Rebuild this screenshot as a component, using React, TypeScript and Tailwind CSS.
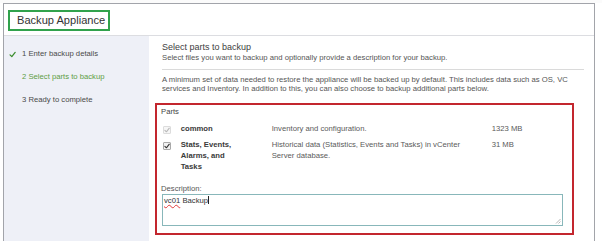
import React from "react";

const parts = [
  {
    name: "common",
    desc: "Inventory and configuration.",
    size: "1323 MB",
    locked: true,
  },
  {
    name: "Stats, Events, Alarms, and Tasks",
    desc: "Historical data (Statistics, Events and Tasks) in vCenter Server database.",
    size: "31 MB",
    locked: false,
  },
];

const steps = [
  { n: 1, label: "Enter backup details", done: true, active: false },
  { n: 2, label: "Select parts to backup", done: false, active: true },
  { n: 3, label: "Ready to complete", done: false, active: false },
];

function Check({ className }: { className?: string }) {
  return (
    <svg viewBox="0 0 10 10" className={className}>
      <path d="M1.5 5.5 L4 8 L8.8 2" fill="none" stroke="currentColor" strokeWidth="1.8" strokeLinecap="round" strokeLinejoin="round" />
    </svg>
  );
}

function Box({ locked }: { locked: boolean }) {
  return (
    <div
      className={
        "w-[8px] h-[8px] mt-[1.5px] rounded-[1px] border flex items-center justify-center " +
        (locked ? "border-[#dcdcdc] bg-[#f6f6f6] text-[#b8b8b8]" : "border-[#a9a9a9] bg-[#f2f2f2] text-[#333]")
      }
    >
      <Check className="w-[6px] h-[6px]" />
    </div>
  );
}

export default function App() {
  return (
    <div className="w-[602px] h-[241px] bg-white overflow-hidden font-['Liberation_Sans',Arial,sans-serif] text-[#5a5a5a]">
      {/* sliver of the page behind the dialog */}
      <div className="h-[3px] bg-[#fbfbfb]" />

      <div className="ml-[3px] w-[592px] h-[238px] border-l border-t border-r border-[#a2a4aa] flex flex-col">
        <div className="h-[32px] shrink-0 border-b border-[#dcdde1] pl-[4px] pt-[6px]">
          <div className="w-[102px] h-[21px] border-2 border-[#31a24c] flex items-center pl-[7px] text-[11.1px] text-[#333]">
            Backup Appliance
          </div>
        </div>

        <div className="flex flex-1">
          <div className="w-[145px] shrink-0 bg-[#eef0f7] pt-[13px] pl-[5px]">
            {steps.map((s) => (
              <div key={s.n} className="flex h-[23px] text-[7.7px] leading-[10px]">
                <div className="w-[13px] flex pt-[2px]">
                  {s.done && <Check className="w-[7px] h-[7px] text-[#3b8d2d]" />}
                </div>
                <span className={s.active ? "text-[#5e9e45]" : "text-[#4a4a4a]"}>
                  {s.n} {s.label}
                </span>
              </div>
            ))}
          </div>

          <div className="flex-1 pl-[6px] pt-[6px]">
            <div className="pl-[7px]">
              <div className="text-[9px] leading-[11px] text-[#3e3e3e]">Select parts to backup</div>
              <div className="text-[7.7px] leading-[9px] text-[#555]">
                Select files you want to backup and optionally provide a description for your backup.
              </div>
            </div>
            <div className="ml-[7px] mt-[7px] w-[422px] h-px bg-[#dadada]" />
            <p className="pl-[7px] mt-[5px] w-[430px] text-[7.7px] leading-[9px] text-[#555]">
              A minimum set of data needed to restore the appliance will be backed up by default. This includes data
              such as OS, VC services and Inventory. In addition to this, you can also choose to backup additional parts
              below.
            </p>

            <div className="mt-[10px] w-[419px] h-[132px] border-2 border-[#c3262e] pl-[4px] pt-[2px]">
              <div className="text-[7.7px] leading-[9px] text-[#444]">Parts</div>
              <div className="mt-[8px] flex flex-col gap-[5.7px]">
                {parts.map((p) => (
                  <div key={p.name} className="flex pl-[2px] text-[7.7px] leading-[10.7px]">
                    <div className="w-[17.7px] shrink-0">
                      <Box locked={p.locked} />
                    </div>
                    <div className="w-[91px] shrink-0 pr-[29px] font-bold text-[#3a3a3a]">{p.name}</div>
                    <div className="w-[220px] shrink-0 pr-[16px]">{p.desc}</div>
                    <div>{p.size}</div>
                  </div>
                ))}
              </div>

              <div className="mt-[11.5px] text-[7.7px] leading-[9px] text-[#555]">Description:</div>
              <div className="relative ml-[1px] mt-[0.5px] w-[401px] h-[32px] border border-[#88b7ba] bg-white pl-[1px] pt-[1.5px] text-[7.7px] leading-[9px] text-[#333]">
                <span className="underline decoration-wavy decoration-[#e03b3b] decoration-[0.6px] underline-offset-[1px]">
                  vc01
                </span>{" "}
                Backup
                <span className="inline-block align-[-1px] w-px h-[8px] bg-[#222]" />
                <svg viewBox="0 0 6 6" className="absolute right-[1px] bottom-[1px] w-[6px] h-[6px] text-[#9a9a9a]">
                  <path d="M5.5 1 L1 5.5 M5.5 3.5 L3.5 5.5" stroke="currentColor" strokeWidth="0.7" />
                </svg>
              </div>
            </div>
          </div>
        </div>
      </div>
    </div>
  );
}
